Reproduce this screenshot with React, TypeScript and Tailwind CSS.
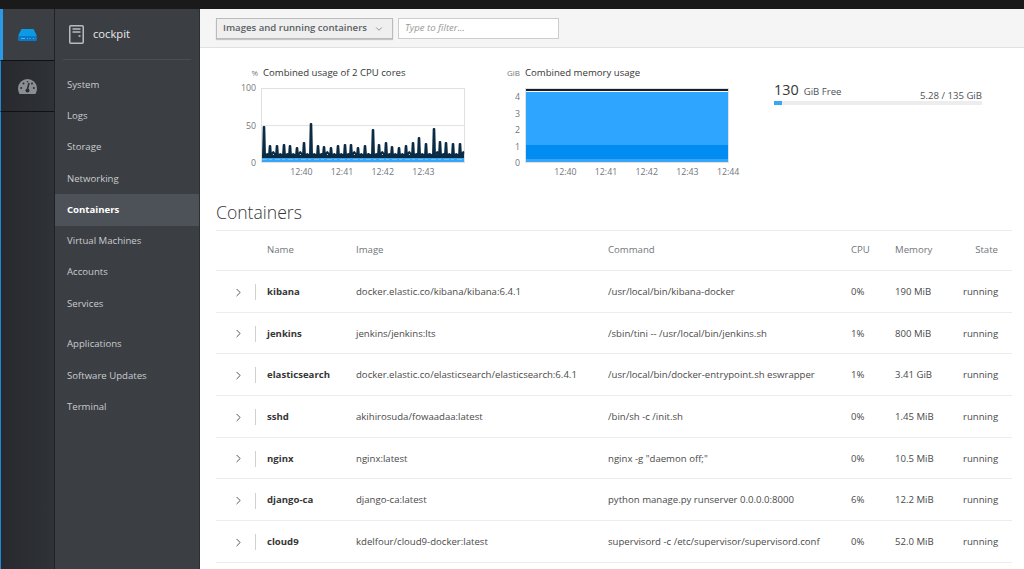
import { ChevronDown, ChevronRight } from 'lucide-react';

const navTop = ['System', 'Logs', 'Storage', 'Networking', 'Containers', 'Virtual Machines', 'Accounts', 'Services'];
const navBottom = ['Applications', 'Software Updates', 'Terminal'];

const containers = [
  { name: 'kibana', image: 'docker.elastic.co/kibana/kibana:6.4.1', command: '/usr/local/bin/kibana-docker', cpu: '0%', memory: '190 MiB' },
  { name: 'jenkins', image: 'jenkins/jenkins:lts', command: '/sbin/tini -- /usr/local/bin/jenkins.sh', cpu: '1%', memory: '800 MiB' },
  { name: 'elasticsearch', image: 'docker.elastic.co/elasticsearch/elasticsearch:6.4.1', command: '/usr/local/bin/docker-entrypoint.sh eswrapper', cpu: '1%', memory: '3.41 GiB' },
  { name: 'sshd', image: 'akihirosuda/fowaadaa:latest', command: '/bin/sh -c /init.sh', cpu: '0%', memory: '1.45 MiB' },
  { name: 'nginx', image: 'nginx:latest', command: 'nginx -g "daemon off;"', cpu: '0%', memory: '10.5 MiB' },
  { name: 'django-ca', image: 'django-ca:latest', command: 'python manage.py runserver 0.0.0.0:8000', cpu: '6%', memory: '12.2 MiB' },
  { name: 'cloud9', image: 'kdelfour/cloud9-docker:latest', command: 'supervisord -c /etc/supervisor/supervisord.conf', cpu: '0%', memory: '52.0 MiB' },
];

// spike tops read off the reference, in chart pixels
const spikes: [number, number][] = [
  [3, 39], [9, 58], [16, 58], [23, 57], [29, 58], [36, 60], [43, 55], [50, 36], [57, 58], [63, 59], [70, 60], [77, 58],
  [84, 57], [90, 57], [97, 60], [104, 58], [112, 42], [118, 57], [125, 55], [131, 59], [138, 60], [145, 58], [152, 55],
  [158, 50], [165, 56], [173, 41], [179, 54], [185, 55], [192, 56], [199, 56],
];

function cpuLine() {
  let d = 'M1 68';
  spikes.forEach(([x, y], i) => {
    const bump = i % 4 === 1 ? 64 : 66;
    d += ` L${x - 1} 68 L${x - 0.3} ${y} L${x + 0.3} ${y} L${x + 1} 68 L${x + 3.3} ${bump}`;
  });
  return d + ' L202 67';
}

function CpuChart() {
  return (
    <svg width="204" height="76" viewBox="0 0 204 76" className="block">
      <rect x="0.5" y="0.5" width="203" height="74" fill="#fff" stroke="#e0e0e0" />
      <line x1="0" y1="37.5" x2="204" y2="37.5" stroke="#e3e3e3" />
      <rect x="1" y="70" width="202" height="4" fill="#39a5f5" />
      <line x1="1" y1="71.5" x2="203" y2="71.5" stroke="#6dbdf6" strokeDasharray="5 2 3 3" />
      <path d={cpuLine()} fill="none" stroke="#0b2b45" strokeWidth="2" strokeLinejoin="round" />
      <line x1="1" y1="68.5" x2="203" y2="68.5" stroke="#0b2b45" strokeWidth="3" />
    </svg>
  );
}

function MemoryChart() {
  return (
    <svg width="204" height="76" viewBox="0 0 204 76" className="block">
      <rect x="0.5" y="0.5" width="203" height="74" fill="#fff" stroke="#e0e0e0" />
      <rect x="1" y="1" width="202" height="2" fill="#11202e" />
      <rect x="1" y="4" width="202" height="70" fill="#2ea6ff" />
      <rect x="1" y="57" width="202" height="14" fill="#008cf0" />
      <rect x="1" y="71" width="202" height="3" fill="#39a5f5" />
    </svg>
  );
}

function ChartFrame({ unit, title, yLabels, xLabels, headClass, yClass, children }: {
  unit: string;
  title: string;
  yLabels: string[];
  xLabels: string[];
  headClass: string;
  yClass: string;
  children: React.ReactNode;
}) {
  return (
    <div className="w-[264px] shrink-0">
      <div className="flex h-[16px] items-center">
        <span className={`pr-[5px] text-right text-[8px] text-[#72767b] ${headClass}`}>{unit}</span>
        <span className="text-[9.6px] text-[#363636]">{title}</span>
      </div>
      <div className="mt-[7px] flex">
        <div className={`-mt-[6px] -mb-[5px] flex w-[38px] flex-col pr-[5px] text-right text-[8.8px] leading-[12px] text-[#72767b] ${yClass}`}>
          {yLabels.map(l => <span key={l}>{l}</span>)}
        </div>
        {children}
      </div>
      <div className="mt-[2px] flex pl-[58px] text-[8.8px] text-[#72767b]">
        {xLabels.map(l => <span key={l} className="w-[40.7px] shrink-0 text-center">{l}</span>)}
      </div>
    </div>
  );
}

function DriveIcon() {
  return (
    <svg width="19" height="12" viewBox="0 0 19 12">
      <path d="M3.5 0 H15.5 L18.5 6 V11 Q18.5 12 17.5 12 H1.5 Q0.5 12 0.5 11 V6 Z" fill="#0a9be4" />
      <rect x="0.5" y="7" width="18" height="5" rx="1" fill="#0a78c8" />
      <path d="M3 9.5 H7 M9 9.5 H10 M11.5 9.5 H12.5 M15 9.5 H16" stroke="#4db4ea" strokeWidth="1" />
    </svg>
  );
}

function GaugeIcon() {
  return (
    <svg width="19" height="15" viewBox="0 0 19 15">
      <path d="M9.5 0 A9.5 9.5 0 0 0 0 9.5 Q0 12.5 1.5 15 H17.5 Q19 12.5 19 9.5 A9.5 9.5 0 0 0 9.5 0 Z" fill="#8b8f93" />
      <path d="M9.5 10 L11 4" stroke="#2b2e33" strokeWidth="1.6" />
      <circle cx="9.5" cy="11.5" r="2" fill="#2b2e33" />
      <circle cx="3.2" cy="9" r="1" fill="#2b2e33" />
      <circle cx="5.5" cy="4.6" r="1" fill="#2b2e33" />
      <circle cx="9.5" cy="2.8" r="0.8" fill="#2b2e33" />
      <circle cx="15.8" cy="9" r="1" fill="#2b2e33" />
      <circle cx="14" cy="4.6" r="1" fill="#2b2e33" />
    </svg>
  );
}

function ServerIcon() {
  return (
    <svg width="15" height="19" viewBox="0 0 15 19" fill="none" stroke="#b9bcbf" strokeWidth="1.5">
      <rect x="0.75" y="0.75" width="13.5" height="17.5" rx="1" />
      <path d="M3.5 4 H11.5 M3.5 7 H11.5" strokeWidth="1.3" />
      <path d="M9.5 11 H11.5" strokeWidth="1.6" />
    </svg>
  );
}

function NavItem({ label }: { label: string }) {
  const active = label === 'Containers';
  return (
    <div className={`flex h-[31.3px] items-center pl-[12px] text-[9.6px] ${active ? 'bg-[#4d5258] font-bold text-white' : 'text-[#c9cbcd]'}`}>
      {label}
    </div>
  );
}

export default function App() {
  return (
    <div className="flex h-[569px] w-[1024px] flex-col overflow-hidden bg-white font-['Open_Sans',sans-serif]">
      <div className="h-[9px] shrink-0 bg-[#1a1a1a]" />
      <div className="flex min-h-0 flex-1">
        <div className="flex w-[200px] shrink-0 border-r border-[#2c2f32] bg-[#3b3f44]">
          <div className="w-[55px] shrink-0 overflow-hidden border-r border-[#1f2225] bg-linear-to-r from-[#27292e] to-[#2f3236]">
            <div className="flex h-[51px] items-center justify-center border-l-[3px] border-[#2a9ae8] bg-[#3b3f44] pr-[3px]">
              <DriveIcon />
            </div>
            <div className="flex h-[52px] items-center justify-center border-y border-l border-y-[#111] border-l-[#1e88d8] pr-[1px]">
              <GaugeIcon />
            </div>
            <div className="h-full border-l border-[#1e88d8]" />
          </div>
          <div className="min-w-0 flex-1">
            <div className="mx-[8px] flex h-[51px] items-center gap-[9px] border-b border-[#4a4e53] pl-[6px] pt-[1px]">
              <ServerIcon />
              <span className="text-[11.2px] text-[#e8e9ea]">cockpit</span>
            </div>
            <div className="mt-[9.2px]">
              {navTop.map(l => <NavItem key={l} label={l} />)}
            </div>
            <div className="mt-[9.3px]">
              {navBottom.map(l => <NavItem key={l} label={l} />)}
            </div>
          </div>
        </div>

        <div className="min-w-0 flex-1">
          <div className="flex h-[39px] items-center gap-[5px] border-b border-[#e0e0e0] bg-[#f5f5f5] pl-[16px]">
            <div className="flex h-[21px] w-[177px] items-center justify-between border border-[#bbb] bg-[#efefef] px-[6px] pt-[1px] text-[9.6px] font-semibold text-[#5a5f64] shadow-[0_1px_1px_rgba(0,0,0,0.2)]">
              <span>Images and running containers</span>
              <ChevronDown size={10} strokeWidth={1.5} className="mr-[2px]" />
            </div>
            <div className="flex h-[21px] w-[161px] items-center border border-[#ccc] bg-white px-[6px] pt-[1px] text-[9.6px] italic text-[#999]">
              Type to filter...
            </div>
          </div>

          <div className="flex h-[146px] pl-[23px] pt-[17px]">
            <ChartFrame
              unit="%"
              title="Combined usage of 2 CPU cores"
              yLabels={['100', '50', '0']}
              xLabels={['12:40', '12:41', '12:42', '12:43']}
              headClass="w-[40px]"
              yClass="justify-between"
            >
              <CpuChart />
            </ChartFrame>
            <ChartFrame
              unit="GiB"
              title="Combined memory usage"
              yLabels={['4', '3', '2', '1', '0']}
              xLabels={['12:40', '12:41', '12:42', '12:43', '12:44']}
              headClass="w-[38px]"
              yClass="justify-between pt-[9px]"
            >
              <MemoryChart />
            </ChartFrame>
            <div className="ml-[23px] w-[208px] pt-[14px]">
              <div className="flex items-end justify-between text-[#4d5258]">
                <span className="text-[9.6px]">
                  <span className="mr-[5px] text-[14.4px] text-[#363636]">130</span>GiB Free
                </span>
                <span className="text-[9.6px] leading-[11px]">5.28 / 135 GiB</span>
              </div>
              <div className="h-[4px] bg-[#ededed]">
                <div className="h-full w-[8px] bg-[#39a5f5]" />
              </div>
            </div>
          </div>

          <div className="mx-[16px] w-[796px]">
            <h1 className="flex h-[37px] items-center border-b border-[#ededed] text-[17.6px] font-light text-[#363636]">Containers</h1>
            <div className="grid h-[40px] grid-cols-[51px_89px_252px_243px_44px_68px_49px] items-center border-b border-[#ededed] text-[9.6px] text-[#72767b]">
              <span />
              <span>Name</span>
              <span>Image</span>
              <span>Command</span>
              <span>CPU</span>
              <span>Memory</span>
              <span className="pr-[14px] text-right">State</span>
            </div>
            {containers.map(c => (
              <div key={c.name} className="grid h-[41.7px] grid-cols-[51px_89px_252px_243px_44px_68px_49px] items-center border-b border-[#ededed] pt-[1.5px] text-[9.6px] text-[#4a4a4a]">
                <span className="flex h-[16px] items-center justify-between">
                  <ChevronRight size={13} strokeWidth={1.8} className="ml-[16px] text-[#4d5258]" />
                  <span className="mr-[11px] h-[16px] w-px bg-[#d1d1d1]" />
                </span>
                <span className="font-bold text-[#363636]">{c.name}</span>
                <span className="whitespace-nowrap">{c.image}</span>
                <span className="whitespace-nowrap">{c.command}</span>
                <span>{c.cpu}</span>
                <span>{c.memory}</span>
                <span className="pr-[14px] text-right">running</span>
              </div>
            ))}
          </div>
        </div>
      </div>
    </div>
  );
}
